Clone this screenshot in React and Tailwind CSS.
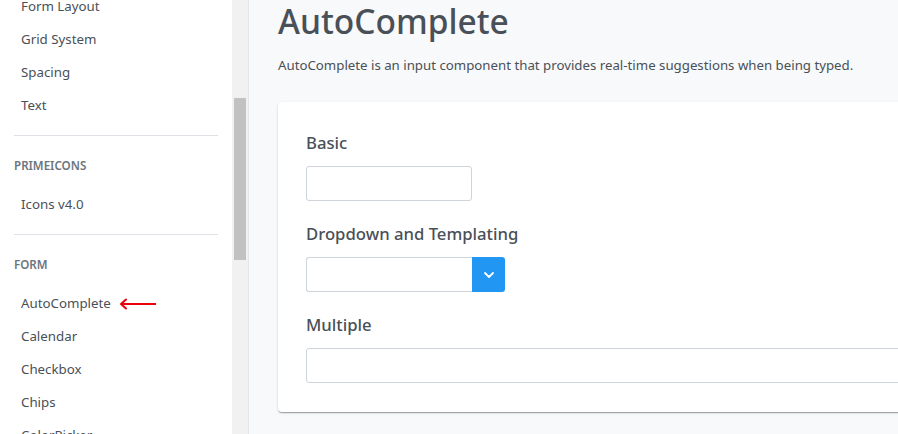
import React from "react";

const FONT = { fontFamily: '"Noto Sans", "Open Sans", "Liberation Sans", sans-serif' };

function NavItem({ children, arrow }) {
  return (
    <div className="h-[33px] flex items-center pl-[21px] text-[13.3px] text-[#495057]">
      <span>{children}</span>
      {arrow && (
        <svg width="38" height="12" viewBox="0 0 38 12" className="ml-[8px]">
          <path d="M2 6 H37" stroke="#e8000b" strokeWidth="2" fill="none" />
          <path d="M7 1.5 L2 6 L7 10.5" stroke="#e8000b" strokeWidth="2" fill="none" strokeLinecap="round" strokeLinejoin="round" />
        </svg>
      )}
    </div>
  );
}

function Section({ children }) {
  return (
    <div className="h-[20px] mt-[19.5px] mb-[12.5px] flex items-center pl-[14px] text-[11.6px] font-semibold text-[#6c757d]">
      {children}
    </div>
  );
}

function Divider() {
  return <div className="mx-[14px] mt-[13px] h-px bg-[#dee2e6]" />;
}

function Field({ label, children, first }) {
  return (
    <div className={first ? "" : "mt-[22px]"}>
      <h5 className="text-[16.7px] leading-[21px] font-medium text-[#495057] mb-[13px]">{label}</h5>
      {children}
    </div>
  );
}

export default function App() {
  return (
    <div className="w-[898px] h-[434px] overflow-hidden flex bg-[#f8f9fa]" style={FONT}>
      <aside className="w-[232px] shrink-0 bg-white h-full overflow-hidden">
        <div className="-mt-[10px]">
          <NavItem>Form Layout</NavItem>
          <NavItem>Grid System</NavItem>
          <NavItem>Spacing</NavItem>
          <NavItem>Text</NavItem>
          <Divider />
          <Section>PRIMEICONS</Section>
          <NavItem>Icons v4.0</NavItem>
          <Divider />
          <Section>FORM</Section>
          <NavItem arrow>AutoComplete</NavItem>
          <NavItem>Calendar</NavItem>
          <NavItem>Checkbox</NavItem>
          <NavItem>Chips</NavItem>
          <NavItem>ColorPicker</NavItem>
        </div>
      </aside>
      <div className="w-[17px] shrink-0 bg-[#f1f1f1] h-full pt-[98px] px-[2px] border-r border-[#e4e6e8]">
        <div className="h-[162px] bg-[#c1c1c1]" />
      </div>
      <main className="flex-1 min-w-0 pl-[29px] overflow-hidden">
        <h1 className="text-[33.5px] leading-[42px] font-medium text-[#495057]">AutoComplete</h1>
        <p className="mt-[13px] text-[13.25px] leading-[21px] text-[#495057]">
          AutoComplete is an input component that provides real-time suggestions when being typed.
        </p>
        <div className="mt-[26px] w-[720px] bg-white rounded-[4px] shadow-[0_2px_1px_-1px_rgba(0,0,0,0.2),0_1px_1px_0_rgba(0,0,0,0.14),0_1px_3px_0_rgba(0,0,0,0.12)] px-[28px] pt-[30px] pb-[29px]">
          <Field label="Basic" first>
            <div className="w-[166px] h-[35px] border border-[#ced4da] rounded-[3px] bg-white" />
          </Field>
          <Field label="Dropdown and Templating">
            <div className="flex">
              <div className="w-[166px] h-[35px] border border-[#ced4da] border-r-0 rounded-l-[3px] bg-white" />
              <div className="w-[33px] h-[35px] bg-[#2196f3] rounded-r-[3px] flex items-center justify-center">
                <svg width="14" height="14" viewBox="0 0 14 14">
                  <path d="M3 5 L7 9 L11 5" stroke="white" strokeWidth="1.8" fill="none" strokeLinecap="round" strokeLinejoin="round" />
                </svg>
              </div>
            </div>
          </Field>
          <Field label="Multiple">
            <div className="w-full h-[35px] border border-[#ced4da] rounded-[3px] bg-white" />
          </Field>
        </div>
      </main>
    </div>
  );
}
